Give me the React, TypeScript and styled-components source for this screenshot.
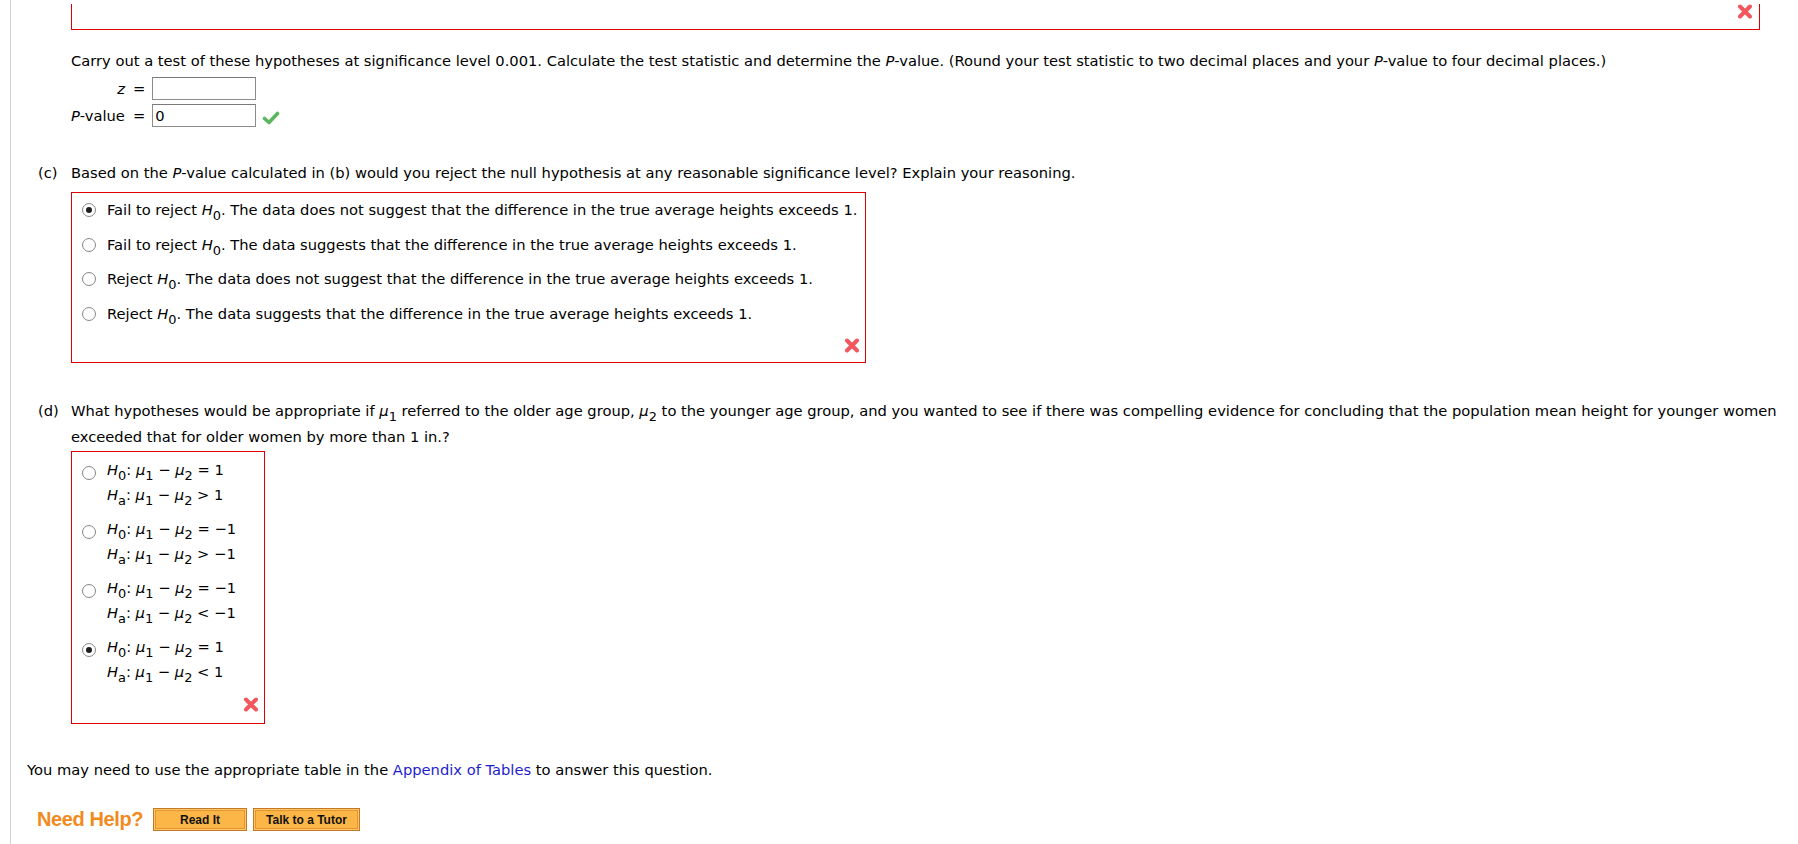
import { ReactElement, ReactNode } from "react";
import styled, { createGlobalStyle } from "styled-components";

const GlobalStyle = createGlobalStyle`
    html, body {
        margin: 0;
        padding: 0;
        background: #ffffff;
    }
    body {
        font-family: Verdana, "DejaVu Sans", sans-serif;
        font-size: 14.7px;
        color: #000000;
    }
`;

type ChoiceItem = {
    checked: boolean;
    content: ReactNode;
};

function H({ s }: { s: string }): ReactElement {
    return (
        <>
            <Var>H</Var>
            <Sub>{s}</Sub>
        </>
    );
}

function Mu({ s }: { s: string }): ReactElement {
    return (
        <>
            <Var>μ</Var>
            <Sub>{s}</Sub>
        </>
    );
}

function WrongIcon(): ReactElement {
    return (
        <svg width="16" height="15" viewBox="0 0 16 15">
            <path d="M3 2.5 L13 12.5 M13 2.5 L3 12.5" stroke="#f2575d" strokeWidth="4" strokeLinecap="round" />
        </svg>
    );
}

function RightIcon(): ReactElement {
    return (
        <svg width="18" height="14" viewBox="0 0 18 14">
            <path d="M2.5 7.5 L7 11.5 L15.5 2.5" stroke="#5db55d" strokeWidth="3.6" fill="none" strokeLinecap="round" strokeLinejoin="round" />
        </svg>
    );
}

function Hyp({ rel, val }: { rel: string; val: string }): ReactElement {
    return (
        <>
            <H s="a" />: <Mu s="1" /> − <Mu s="2" /> {rel} {val}
        </>
    );
}

const partC: ChoiceItem[] = [
    { checked: true, content: <>Fail to reject <H s="0" />. The data does not suggest that the difference in the true average heights exceeds 1.</> },
    { checked: false, content: <>Fail to reject <H s="0" />. The data suggests that the difference in the true average heights exceeds 1.</> },
    { checked: false, content: <>Reject <H s="0" />. The data does not suggest that the difference in the true average heights exceeds 1.</> },
    { checked: false, content: <>Reject <H s="0" />. The data suggests that the difference in the true average heights exceeds 1.</> },
];

const partD = [
    { checked: false, h0: "1", rel: ">", ha: "1" },
    { checked: false, h0: "−1", rel: ">", ha: "−1" },
    { checked: false, h0: "−1", rel: "<", ha: "−1" },
    { checked: true, h0: "1", rel: "<", ha: "1" },
];

export default function App(): ReactElement {
    return (
        <>
            <GlobalStyle />
            <Page>
                <Part>
                    <PartLabel $lh={20} />
                    <PartBody>
                        <AnswerBox $cut>
                            <MarkRow $cut>
                                <WrongIcon />
                            </MarkRow>
                        </AnswerBox>
                        <Paragraph $lh={20} $top={21}>
                            Carry out a test of these hypotheses at significance level 0.001. Calculate the test statistic and determine the <Var>P</Var>-value. (Round your test statistic to two decimal places and your <Var>P</Var>-value to four decimal places.)
                        </Paragraph>
                        <AnswerGrid>
                            <FieldLabel><Var>z</Var></FieldLabel>
                            <Equals>=</Equals>
                            <Field readOnly defaultValue="" />
                            <span />
                            <FieldLabel><Var>P</Var>-value</FieldLabel>
                            <Equals>=</Equals>
                            <Field readOnly defaultValue="0" />
                            <CheckCell><RightIcon /></CheckCell>
                        </AnswerGrid>
                    </PartBody>
                </Part>

                <Part $top={36}>
                    <PartLabel $lh={20}>(c)</PartLabel>
                    <PartBody>
                        <Paragraph $lh={20}>
                            Based on the <Var>P</Var>-value calculated in (b) would you reject the null hypothesis at any reasonable significance level? Explain your reasoning.
                        </Paragraph>
                        <AnswerBox $top={9} $padTop={7} $bottom={8}>
                            <ChoiceList $gap={14.5}>
                                {partC.map((c, i) => (
                                    <Choice key={i}>
                                        <Radio $checked={c.checked} />
                                        <ChoiceText $lh={20}>{c.content}</ChoiceText>
                                    </Choice>
                                ))}
                            </ChoiceList>
                            <MarkRow>
                                <WrongIcon />
                            </MarkRow>
                        </AnswerBox>
                    </PartBody>
                </Part>

                <Part $top={35}>
                    <PartLabel $lh={26}>(d)</PartLabel>
                    <PartBody>
                        <Paragraph $lh={26}>
                            What hypotheses would be appropriate if <Mu s="1" /> referred to the older age group, <Mu s="2" /> to the younger age group, and you wanted to see if there was compelling evidence for concluding that the population mean height for younger women exceeded that for older women by more than 1 in.?
                        </Paragraph>
                        <AnswerBox $top={1} $width={194} $bottom={10}>
                            <ChoiceList $gap={9.3}>
                                {partD.map((c, i) => (
                                    <Choice key={i}>
                                        <Radio $checked={c.checked} $shift={6} />
                                        <ChoiceText $lh={25}>
                                            <H s="0" />: <Mu s="1" /> − <Mu s="2" /> = {c.h0}
                                            <br />
                                            <Hyp rel={c.rel} val={c.ha} />
                                        </ChoiceText>
                                    </Choice>
                                ))}
                            </ChoiceList>
                            <MarkRow $top={13}>
                                <WrongIcon />
                            </MarkRow>
                        </AnswerBox>
                    </PartBody>
                </Part>

                <Note>
                    You may need to use the appropriate table in the <Link>Appendix of Tables</Link> to answer this question.
                </Note>

                <HelpRow>
                    <NeedHelp>Need Help?</NeedHelp>
                    <HelpButton>Read It</HelpButton>
                    <HelpButton>Talk to a Tutor</HelpButton>
                </HelpRow>
            </Page>
        </>
    );
}

const Page = styled.div`
    margin-left: 10px;
    border-left: 1px solid #d2d2d2;
    min-height: 844px;
    padding: 0 8px 0 16px;
    box-sizing: border-box;
`;

const Part = styled.div<{ $top?: number }>`
    display: grid;
    grid-template-columns: 44px 1fr;
    margin-top: ${(p) => p.$top ?? 0}px;
`;

const PartLabel = styled.div<{ $lh: number }>`
    padding-left: 11px;
    line-height: ${(p) => p.$lh}px;
`;

const PartBody = styled.div`
    min-width: 0;
`;

const Paragraph = styled.p<{ $lh: number; $top?: number }>`
    margin: ${(p) => p.$top ?? 0}px 0 0 0;
    line-height: ${(p) => p.$lh}px;
`;

const Var = styled.i`
    font-style: italic;
`;

const Sub = styled.sub`
    font-size: 0.88em;
    vertical-align: -0.4em;
    line-height: 0;
`;

const AnswerBox = styled.div<{ $cut?: boolean; $top?: number; $width?: number; $bottom?: number; $padTop?: number }>`
    display: ${(p) => (p.$cut ? "block" : "inline-block")};
    box-sizing: border-box;
    width: ${(p) => (p.$width ? `${p.$width}px` : p.$cut ? "auto" : "fit-content")};
    height: ${(p) => (p.$cut ? "26px" : "auto")};
    margin: ${(p) => p.$top ?? 0}px ${(p) => (p.$cut ? 30 : 0)}px 0 0;
    border: 1px solid #e00000;
    border-top: ${(p) => (p.$cut ? "none" : "1px solid #e00000")};
    padding: ${(p) => (p.$cut ? "0 6px 0 0" : `${p.$padTop ?? 5}px 8px ${p.$bottom ?? 7}px 10px`)};
`;

const ChoiceList = styled.div<{ $gap: number }>`
    display: flex;
    flex-direction: column;
    gap: ${(p) => p.$gap}px;
`;

const Choice = styled.label`
    display: flex;
    align-items: flex-start;
    gap: 11px;
`;

const Radio = styled.span<{ $checked: boolean; $shift?: number }>`
    position: relative;
    flex: none;
    width: 14px;
    height: 14px;
    margin-top: ${(p) => 3 + (p.$shift ?? 0)}px;
    border: 1px solid #8a8a8a;
    border-radius: 50%;
    box-sizing: border-box;
    background: radial-gradient(circle at 50% 50%, #ffffff 55%, #ececec 100%);

    &::after {
        content: "";
        display: ${(p) => (p.$checked ? "block" : "none")};
        position: absolute;
        left: 3px;
        top: 3px;
        width: 6px;
        height: 6px;
        border-radius: 50%;
        background: #1e1e1e;
    }
`;

const ChoiceText = styled.div<{ $lh: number }>`
    line-height: ${(p) => p.$lh}px;
    white-space: nowrap;
`;

const MarkRow = styled.div<{ $cut?: boolean; $top?: number }>`
    display: flex;
    justify-content: flex-end;
    margin-top: ${(p) => (p.$cut ? 4 : p.$top ?? 14)}px;
    margin-right: ${(p) => (p.$cut ? 0 : -3)}px;
    height: 16px;
`;

const AnswerGrid = styled.div`
    display: grid;
    grid-template-columns: auto auto auto auto;
    grid-auto-rows: 23px;
    row-gap: 4px;
    align-items: center;
    justify-content: start;
    margin-top: 6px;
`;

const FieldLabel = styled.span`
    justify-self: end;
`;

const Equals = styled.span`
    padding: 0 7px 0 8px;
`;

const Field = styled.input`
    width: 104px;
    height: 23px;
    box-sizing: border-box;
    border: 1px solid #8c8c8c;
    border-top-color: #7a7a7a;
    padding: 0 2px;
    font: inherit;
    color: #000;
    outline: none;
`;

const CheckCell = styled.span`
    display: flex;
    padding: 4px 0 0 6px;
`;

const Note = styled.p`
    margin: 36px 0 0 0;
    line-height: 20px;
`;

const Link = styled.a`
    color: #1e1ecf;
    text-decoration: none;
    cursor: pointer;
`;

const HelpRow = styled.div`
    display: flex;
    align-items: center;
    gap: 6px;
    margin-top: 28px;
    padding-left: 10px;
    height: 23px;
`;

const NeedHelp = styled.span`
    font-family: "Liberation Sans", Arial, sans-serif;
    font-weight: bold;
    font-size: 20px;
    letter-spacing: -0.4px;
    color: #f28a1e;
    margin-right: 4px;
`;

const HelpButton = styled.button`
    min-width: 94px;
    height: 23px;
    padding: 0 12px;
    font-family: "Liberation Sans", Arial, sans-serif;
    font-weight: bold;
    font-size: 12px;
    color: #111;
    background: #fcb647;
    border: 1px solid #c47824;
    box-shadow: inset 0 0 0 1px #fdc869, inset 0 0 0 2px #e6952f;
    cursor: pointer;
`;
